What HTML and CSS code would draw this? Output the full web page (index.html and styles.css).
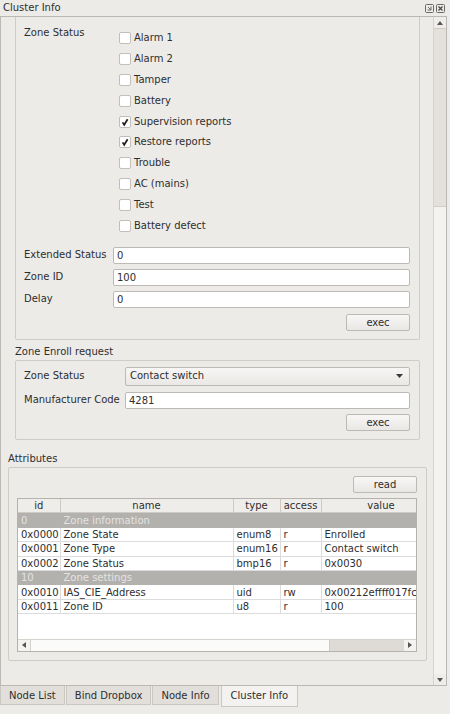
FILE: index.html
```html
<!DOCTYPE html>
<html lang="en">
<head>
    <meta charset="UTF-8">
    <title>Cluster Info</title>
    <link rel="stylesheet" href="styles.css">
</head>
<body>
    <div class="dock-title">
        <span>Cluster Info</span>
        <span class="dock-btns">
            <svg width="9" height="9" viewBox="0 0 9 9"><rect x="0.5" y="0.5" width="8" height="8" rx="1" fill="none" stroke="#6d6a66"/><path d="M6 2.5 V6 H2.5" fill="none" stroke="#6d6a66"/><path d="M3 3 L6 6" stroke="#6d6a66"/></svg>
            <svg width="9" height="9" viewBox="0 0 9 9"><rect x="0.5" y="0.5" width="8" height="8" rx="1" fill="none" stroke="#6d6a66"/><path d="M2.5 2.5 L6.5 6.5 M6.5 2.5 L2.5 6.5" stroke="#4a4744" stroke-width="1.2"/></svg>
        </span>
    </div>

    <div class="scroll">
        <div class="viewport">
            <div class="cmd-area">
                <div class="group cut">
                    <div class="status-row">
                        <div class="status-lbl">Zone Status</div>
                        <div class="checks">
                            <div class="chk"><span class="box"></span>Alarm 1</div>
                            <div class="chk"><span class="box"></span>Alarm 2</div>
                            <div class="chk"><span class="box"></span>Tamper</div>
                            <div class="chk"><span class="box"></span>Battery</div>
                            <div class="chk"><span class="box"><svg width="10" height="10" viewBox="0 0 10 10"><path d="M2.6 5.4 L4.2 7.8 L7.6 2.2" fill="none" stroke="#1f1f1f" stroke-width="1.7"/></svg></span>Supervision reports</div>
                            <div class="chk"><span class="box"><svg width="10" height="10" viewBox="0 0 10 10"><path d="M2.6 5.4 L4.2 7.8 L7.6 2.2" fill="none" stroke="#1f1f1f" stroke-width="1.7"/></svg></span>Restore reports</div>
                            <div class="chk"><span class="box"></span>Trouble</div>
                            <div class="chk"><span class="box"></span>AC (mains)</div>
                            <div class="chk"><span class="box"></span>Test</div>
                            <div class="chk"><span class="box"></span>Battery defect</div>
                        </div>
                    </div>
                    <div class="form narrow">
                        <span class="lbl">Extended Status</span><div class="edit">0</div>
                        <span class="lbl">Zone ID</span><div class="edit">100</div>
                        <span class="lbl">Delay</span><div class="edit">0</div>
                    </div>
                    <div class="btn-row"><div class="btn">exec</div></div>
                </div>

                <div class="group-title">Zone Enroll request</div>
                <div class="group enroll">
                    <div class="form wide">
                        <span class="lbl">Zone Status</span>
                        <div class="combo">Contact switch<svg width="7" height="4" viewBox="0 0 7 4"><path d="M0 0 H7 L3.5 4 Z" fill="#3a3a3a"/></svg></div>
                        <span class="lbl">Manufacturer Code</span><div class="edit">4281</div>
                    </div>
                    <div class="btn-row"><div class="btn">exec</div></div>
                </div>
            </div>

            <div class="attr-area">
                <div class="attr-title">Attributes</div>
                <div class="group attr">
                    <div class="btn-row top"><div class="btn">read</div></div>
                    <div class="table-frame">
                        <div class="table-clip">
                            <table>
                                <colgroup>
                                    <col style="width: 42px">
                                    <col style="width: 173px">
                                    <col style="width: 47px">
                                    <col style="width: 41px">
                                    <col style="width: 120px">
                                </colgroup>
                                <thead>
                                    <tr><th>id</th><th>name</th><th>type</th><th>access</th><th>value</th></tr>
                                </thead>
                                <tbody>
                                    <tr class="section"><td>0</td><td>Zone information</td><td></td><td></td><td></td></tr>
                                    <tr><td>0x0000</td><td>Zone State</td><td>enum8</td><td>r</td><td>Enrolled</td></tr>
                                    <tr><td>0x0001</td><td>Zone Type</td><td>enum16</td><td>r</td><td>Contact switch</td></tr>
                                    <tr><td>0x0002</td><td>Zone Status</td><td>bmp16</td><td>r</td><td>0x0030</td></tr>
                                    <tr class="section"><td>10</td><td>Zone settings</td><td></td><td></td><td></td></tr>
                                    <tr><td>0x0010</td><td>IAS_CIE_Address</td><td>uid</td><td>rw</td><td>0x00212effff017fc0</td></tr>
                                    <tr><td>0x0011</td><td>Zone ID</td><td>u8</td><td>r</td><td>100</td></tr>
                                </tbody>
                            </table>
                        </div>
                        <div class="hscroll">
                            <div class="arrow"><svg width="4" height="6" viewBox="0 0 4 6"><path d="M4 0 V6 L0 3 Z" fill="#555"/></svg></div>
                            <div class="hhandle"></div>
                            <div class="htrough"></div>
                            <div class="arrow"><svg width="4" height="6" viewBox="0 0 4 6"><path d="M0 0 V6 L4 3 Z" fill="#555"/></svg></div>
                        </div>
                    </div>
                </div>
            </div>
        </div>

        <div class="vscroll">
            <div class="varrow"><svg width="6" height="4" viewBox="0 0 6 4"><path d="M0 4 H6 L3 0 Z" fill="#555"/></svg></div>
            <div class="vhandle"></div>
            <div class="vtrough"></div>
            <div class="varrow"><svg width="6" height="4" viewBox="0 0 6 4"><path d="M0 0 H6 L3 4 Z" fill="#555"/></svg></div>
        </div>
    </div>

    <div class="tabs">
        <div class="tab">Node List</div>
        <div class="tab">Bind Dropbox</div>
        <div class="tab">Node Info</div>
        <div class="tab active">Cluster Info</div>
    </div>
</body>
</html>
```

FILE: styles.css
```css
* {
    margin: 0;
    padding: 0;
    box-sizing: border-box;
}
body {
    width: 450px;
    height: 714px;
    overflow: hidden;
    background: #edebe8;
    color: #2e2e2e;
    font-family: "DejaVu Sans", sans-serif;
    font-size: 10px;
    line-height: 14px;
}
.dock-title {
    height: 16px;
    display: flex;
    align-items: center;
    justify-content: space-between;
    padding: 0 5px 0 3px;
}
.dock-btns {
    display: flex;
    gap: 2px;
}
.dock-btns svg {
    display: block;
}

/* scroll area */
.scroll {
    height: 670px;
    margin-right: 3px;
    border: 1px solid #bcb8b3;
    display: flex;
}
.viewport {
    width: 432px;
    overflow: hidden;
}
.vscroll {
    width: 13px;
    display: flex;
    flex-direction: column;
    border-left: 1px solid #d6d2ce;
    background: #f4f3f1;
}
.varrow {
    height: 11px;
    display: flex;
    align-items: center;
    justify-content: center;
    background: #efedea;
}
.vhandle {
    height: 179px;
    background: #e4e1dd;
    border: 1px solid #cfcbc6;
    border-left: none;
    border-right: none;
}
.vtrough {
    flex: 1;
}

/* groups */
.cmd-area {
    padding: 0 13px 0 14px;
}
.group {
    border: 1px solid #cfcbc6;
    border-radius: 2px;
}
.group.cut {
    border-top: none;
    border-radius: 0 0 2px 2px;
    padding: 9px 9px 8px 8px;
}
.group.enroll {
    padding: 6px 9px 8px 8px;
}
.group-title {
    margin-top: 5px;
    height: 15px;
}
.status-row {
    display: flex;
}
.status-lbl {
    width: 95px;
}
.checks {
    padding-top: 2px;
}
.chk {
    height: 20.8px;
    display: flex;
    align-items: center;
    gap: 3px;
}
.box {
    width: 12px;
    height: 12px;
    background: #fff;
    border: 1px solid #c2beb9;
    border-radius: 2px;
    display: flex;
    align-items: center;
    justify-content: center;
}
.box svg {
    display: block;
}

.form {
    display: grid;
    align-items: center;
}
.form.narrow {
    grid-template-columns: 89px 1fr;
    row-gap: 5px;
    margin-top: 11px;
}
.form.wide {
    grid-template-columns: 101px 1fr;
    row-gap: 6px;
}
.edit {
    height: 17px;
    background: #fff;
    border: 1px solid #bdb9b4;
    border-radius: 2px;
    padding: 0 3px;
    line-height: 15px;
}
.combo {
    height: 19px;
    border: 1px solid #bdb9b4;
    border-radius: 2px;
    background: linear-gradient(#f7f6f5, #eae8e5);
    padding: 0 6px 0 4px;
    display: flex;
    align-items: center;
    justify-content: space-between;
}
.btn-row {
    display: flex;
    justify-content: flex-end;
    margin-top: 5px;
}
.narrow + .btn-row {
    margin-top: 6px;
}
.btn-row.top {
    margin-top: 0;
}
.btn {
    width: 64px;
    height: 17px;
    border: 1px solid #bdb9b4;
    border-radius: 2px;
    background: linear-gradient(#f8f7f6, #e9e7e4);
    text-align: center;
    line-height: 15px;
}

/* attributes */
.attr-area {
    padding: 0 6px 0 7px;
}
.attr-title {
    margin-top: 12px;
    height: 15px;
}
.group.attr {
    padding: 8px 9px 8px 8px;
}
.table-frame {
    margin-top: 5px;
    height: 154px;
    border: 1px solid #b6b2ad;
    background: #fff;
    display: flex;
    flex-direction: column;
}
.table-clip {
    flex: 1;
    overflow: hidden;
}
table {
    table-layout: fixed;
    border-collapse: collapse;
    width: 423px;
}
th {
    height: 14px;
    font-weight: normal;
    background: #efedea;
    border-right: 1px solid #cdc9c4;
    border-bottom: 1px solid #cdc9c4;
    line-height: 12px;
    text-align: center;
}
td {
    height: 14.4px;
    padding: 0 0 0 3px;
    border-right: 1px solid #dcdcdc;
    border-bottom: 1px solid #dcdcdc;
    line-height: 13px;
    white-space: nowrap;
    overflow: hidden;
}
tr.section td {
    background: #b3b1ae;
    color: #e4e3e1;
    border-color: #b3b1ae;
}
.hscroll {
    height: 12px;
    display: flex;
    border-top: 1px solid #d6d2ce;
    background: #dedbd7;
}
.arrow {
    width: 12px;
    display: flex;
    align-items: center;
    justify-content: center;
    background: #f4f3f1;
}
.hhandle {
    width: 300px;
    background: #fbfbfa;
    border-left: 1px solid #d6d2ce;
    border-right: 1px solid #cfcbc6;
}
.htrough {
    flex: 1;
}

/* tabs */
.tabs {
    display: flex;
    gap: 1px;
}
.tab {
    height: 19px;
    padding: 0 8px;
    line-height: 19px;
    background: #e2dfdb;
    border: 1px solid #cbc7c2;
    border-top: none;
}
.tab.active {
    height: 21px;
    padding: 0 9px;
    line-height: 20px;
    background: #f3f2f0;
    margin-left: 1px;
}
```
